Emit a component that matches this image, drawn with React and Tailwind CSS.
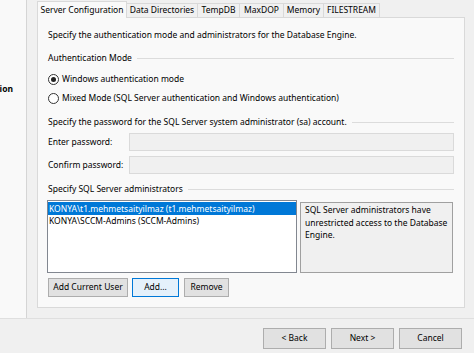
const tabs = [
  { label: 'Server Configuration', w: 'w-[90px]', active: true },
  { label: 'Data Directories', w: 'w-[71px]' },
  { label: 'TempDB', w: 'w-[42px]' },
  { label: 'MaxDOP', w: 'w-[44px]' },
  { label: 'Memory', w: 'w-[40px]' },
  { label: 'FILESTREAM', w: 'w-[56px]' },
];

const GroupHeader = ({ children, className = '' }) => (
  <div className={`flex items-center h-[16px] leading-[16px] pr-[10px] ${className}`}>
    <span className="whitespace-nowrap">{children}</span>
    <div className="flex-1 ml-[5px] border-t border-[#dcdcdc]" />
  </div>
);

const Radio = ({ checked, label, className = '' }) => (
  <div className={`flex items-center h-[16px] leading-[16px] ${className}`}>
    <span className="w-[11px] h-[11px] rounded-full border border-[#333] bg-white flex items-center justify-center">
      {checked && <span className="w-[5px] h-[5px] rounded-full bg-[#222]" />}
    </span>
    <span className="ml-[3px] whitespace-nowrap">{label}</span>
  </div>
);

const Btn = ({ children, className = '', focused }) => (
  <div
    className={`flex items-center justify-center whitespace-nowrap bg-[#e1e1e1] border ${
      focused ? 'border-[#0078d7] bg-[#e5f1fb]' : 'border-[#adadad]'
    } ${className}`}
  >
    {children}
  </div>
);

export default function App() {
  return (
    <div
      className="w-[474px] h-[353px] bg-[#f0f0f0] text-black text-[8.5px] overflow-hidden"
      style={{ fontFamily: '"Noto Sans", "Open Sans", sans-serif' }}
    >
      <div className="flex h-[318px]">
        {/* step list, clipped */}
        <div className="w-[27px] bg-[#f9f9f9] border-r border-[#d5d5d5] overflow-hidden flex flex-col">
          <div className="mt-[81px] h-[16px] leading-[16px] flex justify-end pr-[13px] font-bold whitespace-nowrap">
            Database Engine Configuration
          </div>
        </div>

        <div className="pl-[10px] pt-[1px] flex flex-col">
          {/* tabs */}
          <div className="flex items-end h-[16px]">
            {tabs.map((t) =>
              t.active ? (
                <div
                  key={t.label}
                  className={`${t.w} h-[17px] -mb-px relative z-10 bg-[#f9f9f9] border border-b-0 border-[#d9d9d9] flex items-center justify-center whitespace-nowrap`}
                >
                  {t.label}
                </div>
              ) : (
                <div
                  key={t.label}
                  className={`${t.w} h-[14px] bg-[#f0f0f0] border border-b-0 border-l-0 border-[#d9d9d9] flex items-center justify-center whitespace-nowrap`}
                >
                  {t.label}
                </div>
              )
            )}
          </div>

          {/* tab page */}
          <div className="w-[428px] h-[291px] border border-[#d9d9d9] bg-[#f9f9f9] pl-[10px] flex flex-col">
            <div className="mt-[9px] h-[16px] leading-[16px] whitespace-nowrap">
              Specify the authentication mode and administrators for the Database Engine.
            </div>

            <GroupHeader className="mt-[7px]">Authentication Mode</GroupHeader>
            <Radio checked className="mt-[5px]" label="Windows authentication mode" />
            <Radio className="mt-[3px]" label="Mixed Mode (SQL Server authentication and Windows authentication)" />

            <GroupHeader className="mt-[8px]">
              Specify the password for the SQL Server system administrator (sa) account.
            </GroupHeader>

            <div className="mt-[3px] flex items-center h-[18px] pr-[10px]">
              <span className="w-[81px] whitespace-nowrap">Enter password:</span>
              <div className="flex-1 h-full border border-[#dadada] bg-[#f0f0f0]" />
            </div>
            <div className="mt-[5px] flex items-center h-[18px] pr-[10px]">
              <span className="w-[81px] whitespace-nowrap">Confirm password:</span>
              <div className="flex-1 h-full border border-[#dadada] bg-[#f0f0f0]" />
            </div>

            <GroupHeader className="mt-[7px]">Specify SQL Server administrators</GroupHeader>

            <div className="mt-[3px] flex -ml-[1px] h-[73px]">
              <div className="w-[250px] h-full border border-[#828790] bg-white pt-[1px] whitespace-nowrap">
                <div className="h-[13px] leading-[13px] bg-[#0078d7] text-white pl-[1px]">
                  KONYA\t1.mehmetsaityilmaz (t1.mehmetsaityilmaz)
                </div>
                <div className="h-[11px] leading-[11px] pl-[1px]">KONYA\SCCM-Admins (SCCM-Admins)</div>
              </div>
              <div className="ml-[3px] mt-[2px] w-[153px] h-[71px] border border-[#a0a0a0] bg-[#f0f0f0] pl-[4px] pr-[2px] pt-[1px] leading-[12.5px] whitespace-nowrap">
                SQL Server administrators have
                <br />
                unrestricted access to the Database
                <br />
                Engine.
              </div>
            </div>

            <div className="mt-[5px] flex h-[19px]">
              <Btn className="w-[80px]">Add Current User</Btn>
              <Btn focused className="ml-[4px] w-[47px]">Add...</Btn>
              <Btn className="ml-[5px] w-[45px]">Remove</Btn>
            </div>
          </div>
        </div>
      </div>

      {/* wizard buttons */}
      <div className="border-t border-[#dfdfdf] pt-[9px] pr-[12px] flex justify-end">
        <Btn className="w-[63px] h-[21px]">&lt; Back</Btn>
        <Btn className="ml-[5px] w-[63px] h-[21px]">Next &gt;</Btn>
        <Btn className="ml-[5px] w-[63px] h-[21px]">Cancel</Btn>
      </div>
    </div>
  );
}
